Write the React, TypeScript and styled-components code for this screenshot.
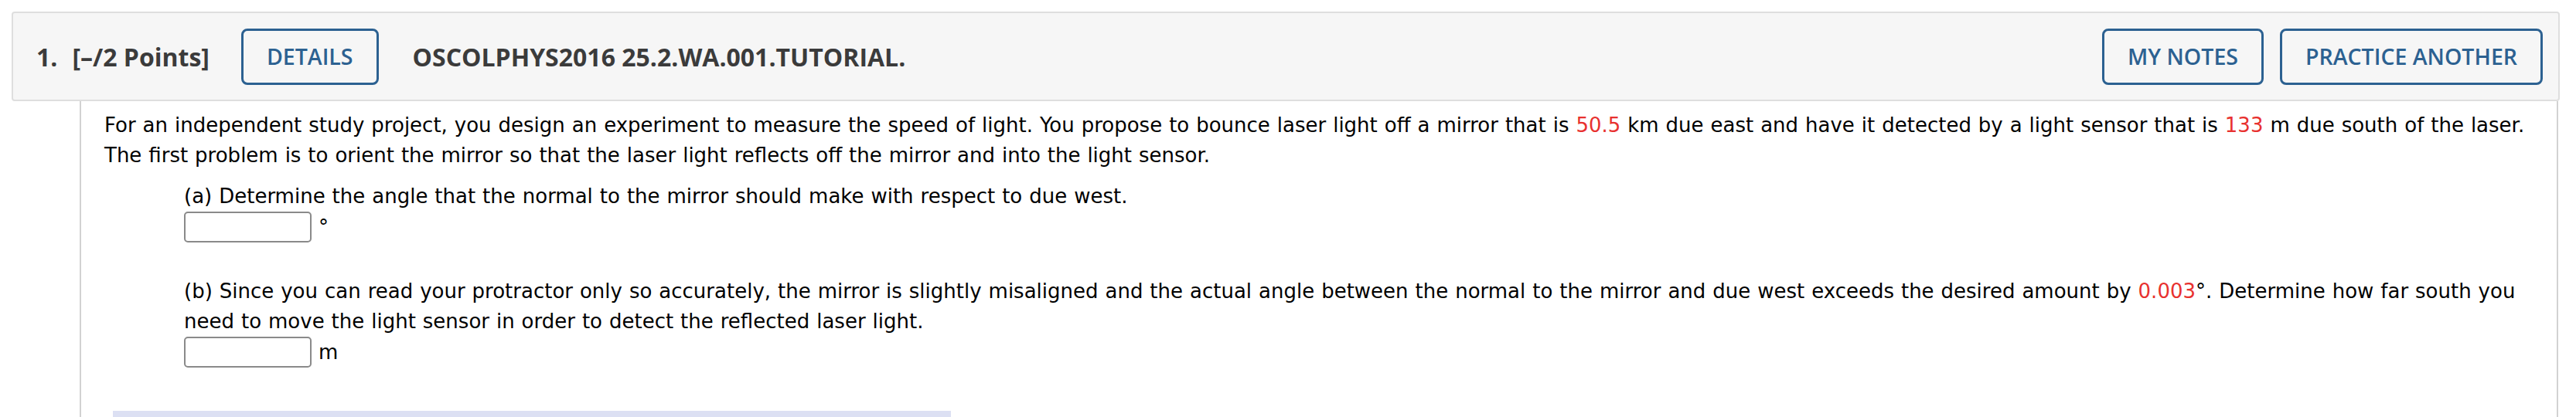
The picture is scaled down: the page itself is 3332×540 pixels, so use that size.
import styled, { createGlobalStyle } from 'styled-components'

const GlobalStyle = createGlobalStyle`
  body {
    margin: 0;
    background: #fff;
  }
`

const Page = styled.div`
  width: 3332px;
  box-sizing: border-box;
  padding: 15px 21px 0 15px;
`

const Header = styled.div`
  display: flex;
  align-items: center;
  height: 116px;
  box-sizing: border-box;
  padding: 0 20px 0 30px;
  background: #f6f6f6;
  border: 2px solid #dedede;
  border-radius: 4px;
  font-family: 'Open Sans', sans-serif;
  font-size: 32px;
  color: #3b3b3b;
`

const Num = styled.span`
  font-weight: 700;
  margin-right: 19px;
`

const Points = styled.span`
  font-weight: 700;
`

const Title = styled.span`
  font-weight: 700;
  margin-left: 44px;
`

const Spacer = styled.div`
  flex: 1;
`

const Actions = styled.div`
  display: flex;
  gap: 21px;
`

const OutlineButton = styled.button<{ $gap?: number }>`
  height: 73px;
  box-sizing: border-box;
  margin-left: ${p => p.$gap ?? 0}px;
  padding: 0 30px;
  background: transparent;
  border: 3px solid #2c6191;
  border-radius: 8px;
  color: #2c6191;
  font-family: 'Open Sans', sans-serif;
  font-weight: 600;
  font-size: 28.5px;
`

const Content = styled.div`
  min-height: 420px;
  margin: 0 2px 0 88px;
  padding: 12px 22px 0 30px;
  border-left: 2px solid #d2d2d2;
  border-right: 2px solid #d2d2d2;
  font-family: 'DejaVu Sans', Verdana, sans-serif;
  font-size: 26px;
  line-height: 39px;
  word-spacing: 0.7px;
  color: #000;
`

const Red = styled.span`
  color: #e8312f;
`

const Part = styled.div<{ $top: number }>`
  margin: ${p => p.$top}px 0 0 103px;
`

const AnswerRow = styled.div`
  display: flex;
  align-items: center;
  gap: 9px;
`

const AnswerInput = styled.input`
  width: 165px;
  height: 40px;
  box-sizing: border-box;
  border: 2px solid #8a8a8a;
  border-radius: 5px;
  background: #fff;
`

const HelpBar = styled.div`
  width: 1084px;
  height: 40px;
  margin: 56px 0 0 11px;
  background: #dce0f3;
`

export default function App() {
  return (
    <Page>
      <GlobalStyle />
      <Header>
        <Num>1.</Num>
        <Points>[–/2 Points]</Points>
        <OutlineButton $gap={41}>DETAILS</OutlineButton>
        <Title>OSCOLPHYS2016 25.2.WA.001.TUTORIAL.</Title>
        <Spacer />
        <Actions>
          <OutlineButton>MY NOTES</OutlineButton>
          <OutlineButton>PRACTICE ANOTHER</OutlineButton>
        </Actions>
      </Header>
      <Content>
        <div>
          For an independent study project, you design an experiment to measure the speed of light. You
          propose to bounce laser light off a mirror that is <Red>50.5</Red> km due east and have it detected by
          a light sensor that is <Red>133</Red> m due south of the laser. The first problem is to orient the
          mirror so that the laser light reflects off the mirror and into the light sensor.
        </div>
        <Part $top={14}>
          (a) Determine the angle that the normal to the mirror should make with respect to due west.
          <AnswerRow>
            <AnswerInput />
            <span>°</span>
          </AnswerRow>
        </Part>
        <Part $top={44}>
          (b) Since you can read your protractor only so accurately, the mirror is slightly misaligned and
          the actual angle between the normal to the mirror and due west exceeds the desired amount by{' '}
          <Red>0.003</Red>°. Determine how far south you need to move the light sensor in order to detect the
          reflected laser light.
          <AnswerRow>
            <AnswerInput />
            <span>m</span>
          </AnswerRow>
        </Part>
        <HelpBar />
      </Content>
    </Page>
  )
}
